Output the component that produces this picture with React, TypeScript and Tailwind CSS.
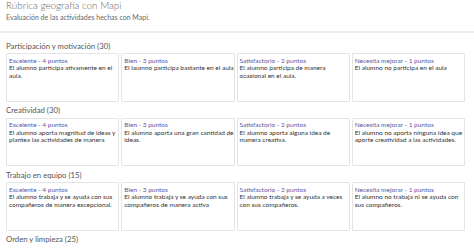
import React from "react";

type Level = { title: string; lines: string[] };
type Section = { name: string; levels: Level[] };

const sections: Section[] = [
  {
    name: "Participación y motivación (30)",
    levels: [
      { title: "Excelente - 4 puntos", lines: ["El alumno participa ativamente en el", "aula."] },
      { title: "Bien - 3 puntos", lines: ["El laumno participa bastante en el aula"] },
      { title: "Satisfactorio - 2 puntos", lines: ["El alumno participa de manera", "ocasional en el aula."] },
      { title: "Necesita mejorar - 1 puntos", lines: ["El alumno no participa en el aula"] },
    ],
  },
  {
    name: "Creatividad (30)",
    levels: [
      { title: "Excelente - 4 puntos", lines: ["El alumno aporta magnitud de ideas y", "plantea las actividades de manera"] },
      { title: "Bien - 3 puntos", lines: ["El alumno aporta una gran cantidad de", "ideas."] },
      { title: "Satisfactorio - 2 puntos", lines: ["El alumno aporta alguna idea de", "manera creativa."] },
      { title: "Necesita mejorar - 1 puntos", lines: ["El alumno no aporta ninguna idea que", "aporte creatividad a las actividades."] },
    ],
  },
  {
    name: "Trabajo en equipo (15)",
    levels: [
      { title: "Excelente - 4 puntos", lines: ["El alumno trabaja y se ayuda con sus", "compañeros de manera excepcional."] },
      { title: "Bien - 3 puntos", lines: ["El alumno trabaja y se ayuda con sus", "compañeros de manera activa"] },
      { title: "Satisfactorio - 2 puntos", lines: ["El alumno trabaja y se ayuda a veces", "con sus compañeros."] },
      { title: "Necesita mejorar - 1 puntos", lines: ["El alumno no trabaja ni se ayuda con", "sus compañeros."] },
    ],
  },
];

export default function App() {
  return (
    <div
      className="w-[474px] h-[248px] overflow-hidden bg-white"
      style={{ fontFamily: "Lato, 'Open Sans', sans-serif" }}
    >
      <div className="pl-[6px] pr-[9px] -mt-[1.5px]">
        <div className="text-[9.9px] leading-[13px] font-light text-[#666]">
          Rúbrica geografía con Mapi
        </div>
        <div className="text-[7px] leading-[9px] text-[#666] mt-[1.5px]">
          Evaluación de las actividades hechas con Mapi.
        </div>
      </div>
      <div className="mt-[9px] h-[2px] bg-[#eeeeee]" />
      <div className="pl-[6px] pr-[9px] pt-[7.5px]">
        {sections.map((s) => (
          <div key={s.name} className="mb-[3.5px]">
            <div className="text-[7.75px] leading-[10px] text-[#555] mb-[2.5px] whitespace-nowrap">{s.name}</div>
            <div className="grid grid-cols-4 gap-[2px]">
              {s.levels.map((l) => (
                <div
                  key={l.title}
                  className="h-[48.5px] border border-[#e4e4e4] rounded-[1px] px-[2px] pt-[2.5px] overflow-hidden"
                >
                  <div className="text-[6.5px] leading-[7.5px] text-[#5b57a6] whitespace-nowrap">{l.title}</div>
                  {l.lines.map((t, i) => (
                    <div key={i} className="text-[6.5px] leading-[7.5px] text-[#333] whitespace-nowrap">
                      {t}
                    </div>
                  ))}
                </div>
              ))}
            </div>
          </div>
        ))}
        <div className="text-[7.75px] leading-[10px] text-[#555]">Orden y limpieza (25)</div>
      </div>
    </div>
  );
}
